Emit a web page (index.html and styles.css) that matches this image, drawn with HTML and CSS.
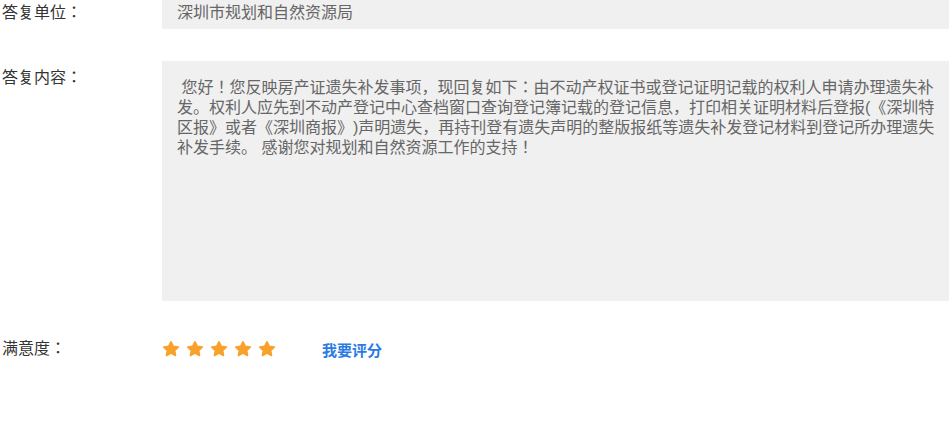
FILE: index.html
```html
<!DOCTYPE html>
<html>
<head>
    <meta charset="UTF-8">
    <meta name="viewport" content="width=device-width, initial-scale=1.0">
    <title>答复详情</title>
    <link rel="stylesheet" href="styles.css">
</head>
<body>
    <div class="reply">
        <div class="row">
            <div class="label">答复单位：</div>
            <div class="value unit">深圳市规划和自然资源局</div>
        </div>

        <div class="row content-row">
            <div class="label">答复内容：</div>
            <div class="value content">&nbsp;您好！您反映房产证遗失补发事项，现回复如下：由不动产权证书或登记证明记载的权利人申请办理遗失补发。权利人应先到不动产登记中心查档窗口查询登记簿记载的登记信息，打印相关证明材料后登报(《深圳特区报》或者《深圳商报》)声明遗失，再持刊登有遗失声明的整版报纸等遗失补发登记材料到登记所办理遗失补发手续。 感谢您对规划和自然资源工作的支持！</div>
        </div>

        <div class="row rate-row">
            <div class="label">满意度：</div>
            <div class="stars">
                <svg class="star" viewBox="0 0 24 24"><path d="M12 2.6l2.9 6 6.6.9-4.8 4.5 1.2 6.5L12 17.4l-5.9 3.1 1.2-6.5-4.8-4.5 6.6-.9z"/></svg>
                <svg class="star" viewBox="0 0 24 24"><path d="M12 2.6l2.9 6 6.6.9-4.8 4.5 1.2 6.5L12 17.4l-5.9 3.1 1.2-6.5-4.8-4.5 6.6-.9z"/></svg>
                <svg class="star" viewBox="0 0 24 24"><path d="M12 2.6l2.9 6 6.6.9-4.8 4.5 1.2 6.5L12 17.4l-5.9 3.1 1.2-6.5-4.8-4.5 6.6-.9z"/></svg>
                <svg class="star" viewBox="0 0 24 24"><path d="M12 2.6l2.9 6 6.6.9-4.8 4.5 1.2 6.5L12 17.4l-5.9 3.1 1.2-6.5-4.8-4.5 6.6-.9z"/></svg>
                <svg class="star" viewBox="0 0 24 24"><path d="M12 2.6l2.9 6 6.6.9-4.8 4.5 1.2 6.5L12 17.4l-5.9 3.1 1.2-6.5-4.8-4.5 6.6-.9z"/></svg>
            </div>
            <a class="rate-link" href="#">我要评分</a>
        </div>
    </div>
</body>
</html>
```

FILE: styles.css
```css
:root {
    --box-bg: #f0f0f0;
    --star-color: #f8a12b;
    --link-color: #2b7be3;
}

body {
    margin: 0;
    font-family: "Liberation Sans", "Noto Sans CJK JP", "Noto Sans CJK SC", sans-serif;
    font-size: 16px;
    color: #333;
    background: #fff;
    text-spacing-trim: space-all;
}

.row {
    display: flex;
    align-items: flex-start;
}

.label {
    width: 160px;
    padding-left: 2px;
    flex-shrink: 0;
    line-height: 26px;
}

.value {
    flex: 1;
    background: var(--box-bg);
    color: #666;
}

.unit {
    height: 29px;
    line-height: 26px;
    padding: 0 8px 0 15px;
}

.content-row {
    margin-top: 32px;
}

.content-row .label {
    line-height: 20px;
    padding-top: 7px;
}

.content {
    height: 240px;
    box-sizing: border-box;
    padding: 17px 8px 0 15px;
    line-height: 20px;
}

.rate-row {
    margin-top: 33px;
    align-items: center;
    height: 30px;
}

.rate-row .label {
    line-height: 30px;
}

.stars {
    display: flex;
    gap: 6px;
}

.star {
    width: 18px;
    height: 18px;
    display: block;
}

.star path {
    fill: var(--star-color);
    stroke: var(--star-color);
    stroke-width: 2.4;
    stroke-linejoin: round;
}

.rate-link {
    margin-left: 46px;
    color: var(--link-color);
    font-weight: bold;
    font-size: 15px;
    text-decoration: none;
}
```
